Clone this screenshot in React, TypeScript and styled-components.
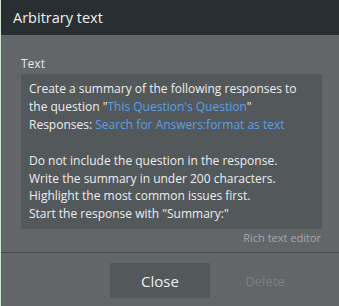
import React from 'react';
import styled, { createGlobalStyle } from 'styled-components';

const GlobalStyle = createGlobalStyle`
  html, body {
    margin: 0;
    padding: 0;
    background: #d8ead6;
  }
  body {
    font-family: 'Open Sans', 'Noto Sans', sans-serif;
    -webkit-font-smoothing: antialiased;
  }
`;

const Page = styled.div`
  display: flex;
  width: 339px;
  height: 306px;
  overflow: hidden;
`;

const Edge = styled.div`
  width: 1px;
  flex-shrink: 0;
  background: #cfe6cc;
`;

const Dialog = styled.div`
  flex: 1;
  display: flex;
  flex-direction: column;
  background: #626669;
`;

const Header = styled.div`
  height: 35px;
  display: flex;
  align-items: center;
  padding: 0 12px;
  background: #282e32;
  color: #eef0f1;
  font-size: 14.5px;
`;

const Body = styled.div`
  display: flex;
  flex-direction: column;
  padding: 20px 17px 5px 20px;
  border-bottom: 1px solid #46494c;
`;

const Label = styled.div`
  color: #e6e8e9;
  font-size: 12px;
  line-height: 18px;
  margin-bottom: 1px;
`;

const TextBox = styled.div`
  background: #53585b;
  color: #eceeef;
  font-size: 12px;
  line-height: 17.9px;
  padding: 6px 8px;
  white-space: pre-wrap;
`;

const Dynamic = styled.span`
  color: #5aa0e6;
`;

const Hint = styled.div`
  align-self: flex-end;
  color: #a3a7a9;
  font-size: 11px;
  line-height: 18px;
  margin-right: 1px;
`;

const Footer = styled.div`
  display: flex;
  gap: 5px;
  padding: 10px 0 0 109px;
`;

const Button = styled.button<{ $muted?: boolean }>`
  width: 100px;
  height: 35px;
  border: none;
  font-family: inherit;
  background: ${(p) => (p.$muted ? 'transparent' : '#53585b')};
  color: ${(p) => (p.$muted ? '#7b8083' : '#eceeef')};
  font-size: ${(p) => (p.$muted ? '13px' : '15px')};
  cursor: pointer;
`;

export default function App() {
  return (
    <>
      <GlobalStyle />
      <Page>
        <Edge />
        <Dialog>
          <Header>Arbitrary text</Header>
          <Body>
            <Label>Text</Label>
            <TextBox>
              Create a summary of the following responses to the question "
              <Dynamic>This Question's Question</Dynamic>"{'\n'}
              Responses: <Dynamic>Search for Answers:format as text</Dynamic>
              {'\n\n'}Do not include the question in the response.{'\n'}
              Write the summary in under 200 characters.{'\n'}
              Highlight the most common issues first.{'\n'}
              Start the response with "Summary:"
            </TextBox>
            <Hint>Rich text editor</Hint>
          </Body>
          <Footer>
            <Button type="button">Close</Button>
            <Button type="button" $muted>
              Delete
            </Button>
          </Footer>
        </Dialog>
      </Page>
    </>
  );
}
